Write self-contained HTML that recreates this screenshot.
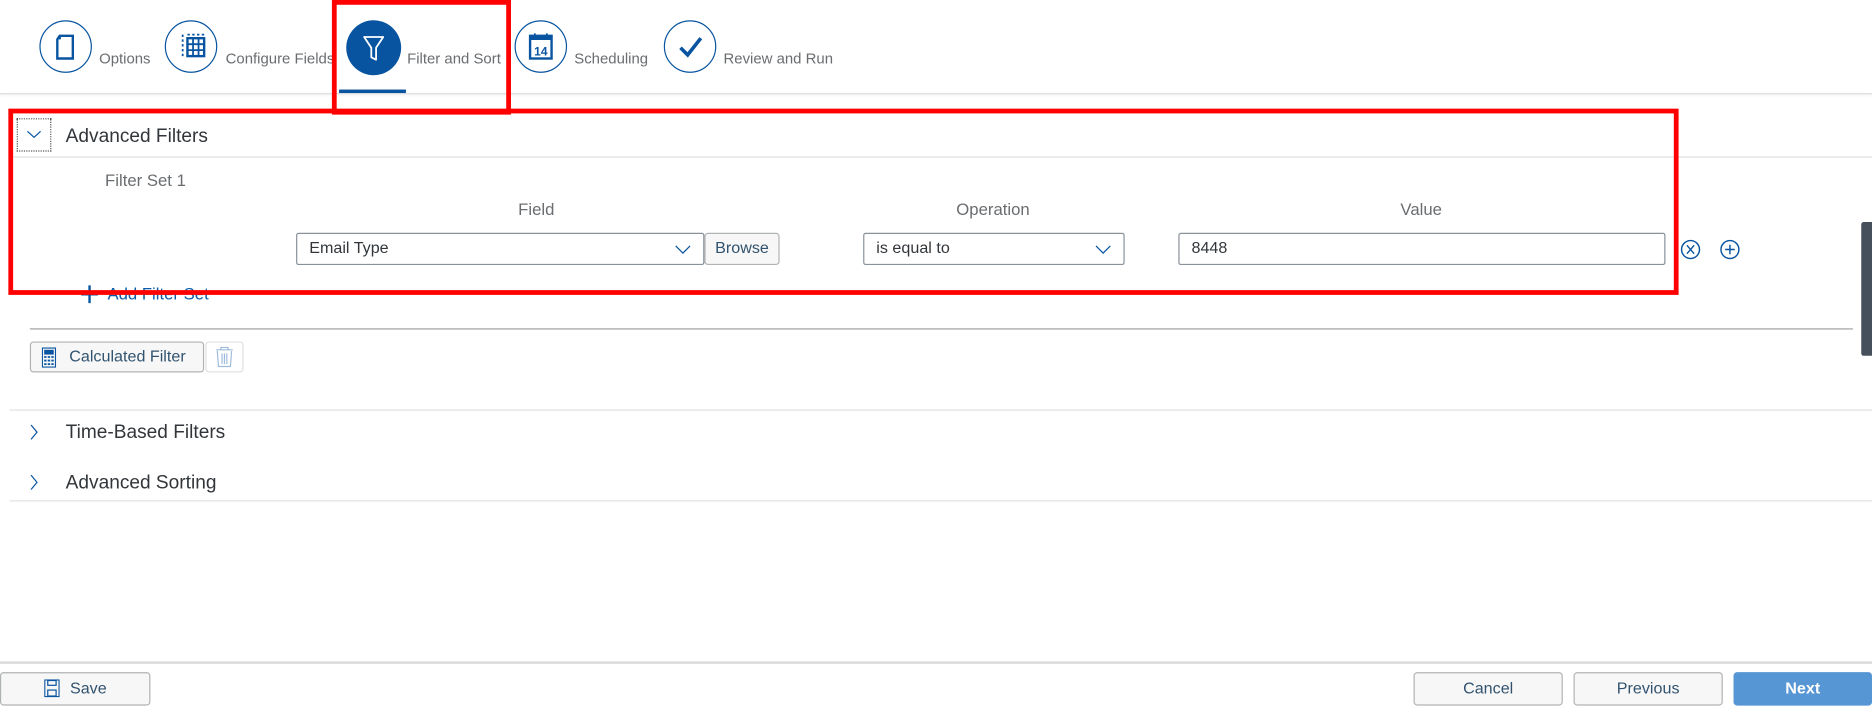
<!DOCTYPE html>
<html><head><meta charset="utf-8"><style>
html,body{margin:0;padding:0;background:#fff;overflow:hidden;width:1872px;height:706px}
#w{position:absolute;left:0;top:0;width:1568px;height:591px;transform:scale(1.19388);transform-origin:0 0;font-family:"Liberation Sans",sans-serif}
.a{position:absolute}
.circ{position:absolute;width:44px;height:44px;border:1px solid #0854a0;border-radius:50%;top:17px;box-sizing:border-box}
.lbl{position:absolute;top:42px;font-size:12.5px;color:#6a6d70}
.inp{position:absolute;border:1px solid #89919a;border-radius:2px;box-sizing:border-box;height:27px;font-size:13.5px;color:#32363a;padding:4px 10px;background:#fff}
.btn{position:absolute;border:1px solid #b0b3b5;border-radius:3px;background:#f7f7f7;box-sizing:border-box;font-size:13.5px;color:#0a4f8f;text-align:center}
.hr{position:absolute;height:1px;background:#e0e0e0}
.red{position:absolute;border:4px solid #ff0000;box-sizing:border-box}
</style></head><body><div id="w">
<div class="circ" style="left:33px"><svg width="44" height="44" viewBox="0 0 44 44" style="position:absolute;left:-1px;top:-1px"><path d="M17 13h11v19H15V16z" fill="none" stroke="#0854a0" stroke-width="2"/><path d="M15 16l3-3v3z" fill="#0854a0"/></svg></div>
<div class="lbl" style="left:83px">Options</div>
<div class="circ" style="left:138px"><svg width="44" height="44" viewBox="0 0 44 44" style="position:absolute;left:-1px;top:-1px"><path d="M15 12v18" stroke="#0854a0" stroke-width="1.5" stroke-dasharray="2 2"/><path d="M19 12h14" stroke="#0854a0" stroke-width="1.5" stroke-dasharray="2 2"/><rect x="19" y="15" width="14" height="15" fill="none" stroke="#0854a0" stroke-width="2"/><path d="M23.7 15v15M28.3 15v15M19 20h14M19 25h14" stroke="#0854a0" stroke-width="1.5"/></svg></div>
<div class="lbl" style="left:189px">Configure Fields</div>
<div class="circ" style="left:290px;width:46px;height:46px;top:17px;background:#0854a0;border:none"><svg width="46" height="46" viewBox="0 0 46 46" style="position:absolute;left:0;top:0"><path d="M15 14h16l-6 9v10l-4-2v-8z" fill="none" stroke="#fff" stroke-width="1.5" stroke-linejoin="round"/></svg></div>
<div class="lbl" style="left:341px">Filter and Sort</div>
<div class="a" style="left:284px;top:75px;width:56px;height:3px;background:#0854a0"></div>
<div class="circ" style="left:431px"><svg width="44" height="44" viewBox="0 0 44 44" style="position:absolute;left:-1px;top:-1px"><rect x="13" y="13" width="18" height="19" fill="none" stroke="#0854a0" stroke-width="2"/><path d="M13 15h18" stroke="#0854a0" stroke-width="3"/><path d="M17 11v4M27 11v4" stroke="#0854a0" stroke-width="1.5"/><text x="22" y="29.5" font-size="10" font-weight="bold" fill="#0854a0" text-anchor="middle" font-family="Liberation Sans">14</text></svg></div>
<div class="lbl" style="left:481px">Scheduling</div>
<div class="circ" style="left:556px"><svg width="44" height="44" viewBox="0 0 44 44" style="position:absolute;left:-1px;top:-1px"><path d="M14 23l6 6 11-14" fill="none" stroke="#0854a0" stroke-width="3"/></svg></div>
<div class="lbl" style="left:606px">Review and Run</div>
<div class="a" style="left:0;top:78px;width:1568px;height:1px;background:#dcdcdc;box-shadow:0 1px 2px rgba(0,0,0,.08)"></div>
<div class="a" style="left:14px;top:99px;width:29px;height:28px;border:1px dotted #555;box-sizing:border-box"><svg width="29" height="28" style="position:absolute;left:-1px;top:-1px"><path d="M9 11l5.5 5 5.5-5" fill="none" stroke="#0854a0" stroke-width="1"/></svg></div>
<div class="a" style="left:55px;top:106px;font-size:16px;color:#32363a">Advanced Filters</div>
<div class="hr" style="left:8px;top:131px;width:1560px"></div>
<div class="a" style="left:88px;top:143px;font-size:14px;color:#6a6d70">Filter Set 1</div>
<div class="a" style="left:434px;top:167px;font-size:14px;color:#6a6d70">Field</div>
<div class="a" style="left:801px;top:167px;font-size:14px;color:#6a6d70">Operation</div>
<div class="a" style="left:1173px;top:167px;font-size:14px;color:#6a6d70">Value</div>
<div class="inp" style="left:248px;top:195px;width:342px">Email Type<svg width="14" height="8" style="position:absolute;right:10px;top:9px"><path d="M1 1l6 6 6-6" fill="none" stroke="#0854a0"/></svg></div>
<div class="btn" style="left:590px;top:195px;width:63px;height:27px;padding-top:4px;color:#32536f">Browse</div>
<div class="inp" style="left:723px;top:195px;width:219px">is equal to<svg width="14" height="8" style="position:absolute;right:10px;top:9px"><path d="M1 1l6 6 6-6" fill="none" stroke="#0854a0"/></svg></div>
<div class="inp" style="left:987px;top:195px;width:408px">8448</div>
<svg class="a" style="left:1407px;top:200px" width="18" height="18"><circle cx="9" cy="9" r="7.5" fill="none" stroke="#0854a0" stroke-width="1.2"/><path d="M6 5.5l6 7M12 5.5l-6 7" stroke="#0854a0" stroke-width="1.2"/></svg>
<svg class="a" style="left:1440px;top:200px" width="18" height="18"><circle cx="9" cy="9" r="7.5" fill="none" stroke="#0854a0" stroke-width="1.2"/><path d="M9 5v8M5 9h8" stroke="#0854a0" stroke-width="1.2"/></svg>
<svg class="a" style="left:67px;top:238px" width="16" height="16"><path d="M8 1v15M1 8.5h14" stroke="#0854a0" stroke-width="2"/></svg>
<div class="a" style="left:90px;top:238px;font-size:14px;color:#0a5ca8">Add Filter Set</div>
<div class="a" style="left:25px;top:275px;width:1527px;height:1px;background:#a0a0a0"></div>
<div class="btn" style="left:25px;top:286px;width:146px;height:26px;padding-top:4px;text-align:left;padding-left:32px;color:#32536f">Calculated Filter</div>
<svg class="a" style="left:35px;top:291px" width="12" height="17"><rect x="0.5" y="0.5" width="11" height="16" fill="none" stroke="#0854a0"/><rect x="2" y="2" width="8" height="4" fill="#0854a0"/><path d="M2 8h2M5 8h2M8 8h2M2 11h2M5 11h2M8 11h2M2 14h2M5 14h2M8 14h2" stroke="#0854a0" stroke-width="1.5"/></svg>
<div class="a" style="left:172px;top:286px;width:32px;height:26px;border:1px solid #e0e0e0;border-radius:3px;box-sizing:border-box"><svg width="32" height="26" style="position:absolute;left:-1px;top:-1px"><path d="M9 7h14M13 7V5h6v2M10 8l1 13h10l1-13M14 10v9M16 10v9M18 10v9" fill="none" stroke="#9fbbdc" stroke-width="1"/></svg></div>
<div class="a" style="left:1559px;top:186px;width:9px;height:112px;background:#45505c;border-radius:2px 0 0 2px"></div>
<div class="hr" style="left:8px;top:343px;width:1560px"></div>
<svg class="a" style="left:24px;top:354px" width="10" height="16"><path d="M2 2l5 6-5 6" fill="none" stroke="#0854a0"/></svg>
<div class="a" style="left:55px;top:354px;font-size:16px;color:#32363a">Time-Based Filters</div>
<svg class="a" style="left:24px;top:396px" width="10" height="16"><path d="M2 2l5 6-5 6" fill="none" stroke="#0854a0"/></svg>
<div class="a" style="left:55px;top:396px;font-size:16px;color:#32363a">Advanced Sorting</div>
<div class="hr" style="left:8px;top:419px;width:1560px"></div>
<div class="a" style="left:0;top:554px;width:1568px;height:2px;background:#d9d9d9"></div>
<div class="btn" style="left:0;top:563px;width:126px;height:28px;padding-top:5px;padding-left:22px;color:#32536f">Save</div>
<svg class="a" style="left:37px;top:569px" width="13" height="15"><rect x="0.5" y="0.5" width="12" height="14" fill="none" stroke="#0854a0"/><rect x="3" y="1" width="7" height="4" fill="none" stroke="#0854a0"/><rect x="3" y="9" width="7" height="5" fill="none" stroke="#0854a0"/></svg>
<div class="btn" style="left:1184px;top:563px;width:125px;height:28px;padding-top:5px;color:#32536f">Cancel</div>
<div class="btn" style="left:1318px;top:563px;width:125px;height:28px;padding-top:5px;color:#32536f">Previous</div>
<div class="btn" style="left:1452px;top:563px;width:116px;height:28px;padding-top:5px;background:#5796d4;border-color:#5796d4;color:#fff;font-weight:bold">Next</div>
<div class="red" style="left:278px;top:0;width:150px;height:96px"></div>
<div class="red" style="left:7px;top:91px;width:1399px;height:156px"></div>
</div></body></html>
